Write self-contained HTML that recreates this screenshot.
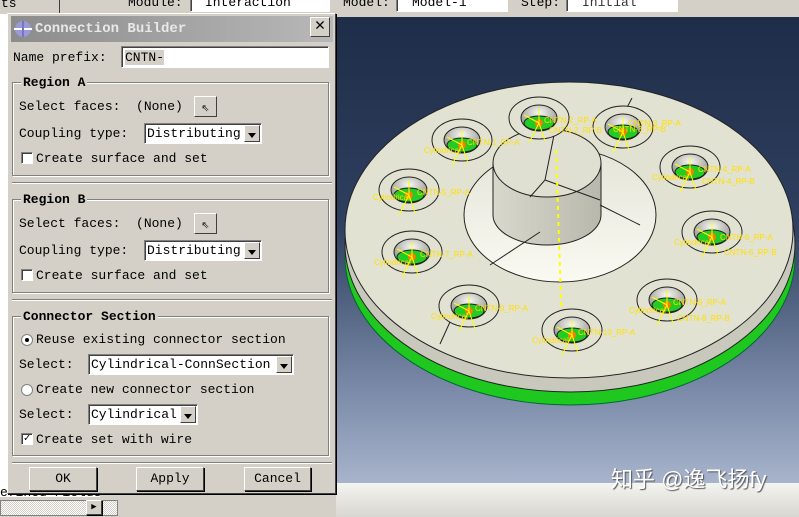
<!DOCTYPE html>
<html><head><meta charset="utf-8"><style>
*{margin:0;padding:0;box-sizing:border-box}
body{width:799px;height:517px;overflow:hidden;background:#d4d0c8;position:relative;font-family:"Liberation Mono",monospace;font-size:13px;color:#000}
.a{position:absolute;white-space:pre}
.vp{position:absolute;left:336px;top:17px;width:463px;height:466px;background:linear-gradient(#1e2d48 0%,#2f4060 45%,#7a8aa8 80%,#a8b4cc 100%)}
.bot{position:absolute;left:336px;top:483px;width:463px;height:34px;background:linear-gradient(#f4f4f0,#d8d6d0)}
.dlg{position:absolute;left:7px;top:13px;width:329px;height:481px;background:#d4d0c8;border:1px solid #fff;border-right-color:#404040;border-bottom-color:#404040;box-shadow:1px 1px 0 #000}
.title{position:absolute;left:3px;top:2px;width:322px;height:26px;background:linear-gradient(90deg,#8c8c8c,#b8b8b8)}
.grp{position:absolute;border:1px solid #808080;box-shadow:inset 1px 1px 0 #fff,1px 1px 0 #fff}
.gt{position:absolute;background:#d4d0c8;font-weight:bold;padding:0 2px}
.in{position:absolute;background:#fff;border:1px solid #808080;border-right-color:#fff;border-bottom-color:#fff;box-shadow:inset 1px 1px 0 #404040}
.dd{position:absolute;width:16px;background:#d4d0c8;border:1px solid #fff;border-right-color:#404040;border-bottom-color:#404040}
.dd:after{content:"";position:absolute;left:3px;top:7px;border:4px solid transparent;border-top:5px solid #000;border-bottom:0}
.btn{position:absolute;background:#d4d0c8;border:1px solid #fff;border-right-color:#404040;border-bottom-color:#404040;box-shadow:1px 1px 0 #000;text-align:center;line-height:22px}
.cb{position:absolute;width:12px;height:12px;background:#fff;border:1px solid #808080;border-right-color:#fff;border-bottom-color:#fff;box-shadow:inset 1px 1px 0 #404040;font-size:11px;line-height:10px;text-align:center}
.rb{position:absolute;width:12px;height:12px;border-radius:50%;background:#fff;border:1px solid #808080}
.sep{position:absolute;left:4px;width:320px;height:2px;border-top:1px solid #808080;border-bottom:1px solid #fff}
</style></head><body>
<div class="a" style="left:0;top:0;width:60px;height:13px;background:#d4d0c8;border-right:1px solid #404040"></div>
<div class="a" style="left:1px;top:-4px">ts</div>
<div class="a" style="left:128px;top:-5px">Module:</div>
<div class="in" style="left:190px;top:-4px;width:140px;height:16px"></div>
<div class="a" style="left:205px;top:-5px">Interaction</div>
<div class="a" style="left:343px;top:-5px">Model:</div>
<div class="in" style="left:396px;top:-4px;width:112px;height:16px"></div>
<div class="a" style="left:412px;top:-5px">Model-1</div>
<div class="a" style="left:521px;top:-5px">Step:</div>
<div class="in" style="left:566px;top:-4px;width:112px;height:16px"></div>
<div class="a" style="left:582px;top:-5px;color:#333">Initial</div>
<div class="a" style="left:0;top:14px;width:7px;height:480px;background:#fff"></div>
<div class="vp"><svg width="463" height="466" viewBox="336 17 463 466" style="position:absolute;left:0;top:0">
<defs><radialGradient id="h" cx="50%" cy="30%" r="70%"><stop offset="0" stop-color="#f8f8f4"/><stop offset="1" stop-color="#8a8a84"/></radialGradient>
<linearGradient id="cyl" x1="0" x2="1"><stop offset="0" stop-color="#d8d8cc"/><stop offset=".5" stop-color="#c8c8bc"/><stop offset="1" stop-color="#b8b8ac"/></linearGradient>
<linearGradient id="fil" x1="0" y1="0" x2="0" y2="1"><stop offset="0" stop-color="#e4e4d8"/><stop offset="1" stop-color="#fafaf2"/></linearGradient></defs>
<ellipse cx="570" cy="257" rx="225" ry="148" fill="#1ec81e" stroke="#063" stroke-width="1"/>
<ellipse cx="570" cy="244" rx="225" ry="148" fill="#c8c8bc" stroke="#222"/>
<ellipse cx="569" cy="230" rx="224" ry="148" fill="#e2e2d2" stroke="#222"/>
<ellipse cx="560" cy="215" rx="96" ry="67" fill="url(#fil)" stroke="#222"/>
<path d="M493 163 L493 215 A54 30 0 0 0 601 215 L601 163 Z" fill="url(#cyl)" stroke="#222"/>
<ellipse cx="547" cy="163" rx="54" ry="34" fill="#e0e0d2" stroke="#222"/>
<path d="M545 180 L555 130 M545 180 L600 200 M545 180 L530 197 M632 98 L610 140 M440 344 L460 300 M540 232 L490 265 M600 205 L640 225" stroke="#222" fill="none"/>
<path d="M556 150 L562 330" stroke="#ff0" stroke-dasharray="4 4" stroke-width="2"/>
<g id="holes" stroke="#222" fill="none">
<g transform="translate(462,140)"><ellipse rx="30" ry="21" fill="#e2e2d2"/><ellipse rx="18" ry="13" fill="url(#h)"/><ellipse cy="5" rx="15" ry="7" fill="#22cc22"/></g>
<g transform="translate(539,118)"><ellipse rx="30" ry="21" fill="#e2e2d2"/><ellipse rx="18" ry="13" fill="url(#h)"/><ellipse cy="5" rx="15" ry="7" fill="#22cc22"/></g>
<g transform="translate(623,127)"><ellipse rx="30" ry="21" fill="#e2e2d2"/><ellipse rx="18" ry="13" fill="url(#h)"/><ellipse cy="5" rx="15" ry="7" fill="#22cc22"/></g>
<g transform="translate(690,167)"><ellipse rx="30" ry="21" fill="#e2e2d2"/><ellipse rx="18" ry="13" fill="url(#h)"/><ellipse cy="5" rx="15" ry="7" fill="#22cc22"/></g>
<g transform="translate(409,190)"><ellipse rx="30" ry="21" fill="#e2e2d2"/><ellipse rx="18" ry="13" fill="url(#h)"/><ellipse cy="5" rx="15" ry="7" fill="#22cc22"/></g>
<g transform="translate(712,232)"><ellipse rx="30" ry="21" fill="#e2e2d2"/><ellipse rx="18" ry="13" fill="url(#h)"/><ellipse cy="5" rx="15" ry="7" fill="#22cc22"/></g>
<g transform="translate(412,252)"><ellipse rx="30" ry="21" fill="#e2e2d2"/><ellipse rx="18" ry="13" fill="url(#h)"/><ellipse cy="5" rx="15" ry="7" fill="#22cc22"/></g>
<g transform="translate(667,300)"><ellipse rx="30" ry="21" fill="#e2e2d2"/><ellipse rx="18" ry="13" fill="url(#h)"/><ellipse cy="5" rx="15" ry="7" fill="#22cc22"/></g>
<g transform="translate(469,306)"><ellipse rx="30" ry="21" fill="#e2e2d2"/><ellipse rx="18" ry="13" fill="url(#h)"/><ellipse cy="5" rx="15" ry="7" fill="#22cc22"/></g>
<g transform="translate(572,330)"><ellipse rx="30" ry="21" fill="#e2e2d2"/><ellipse rx="18" ry="13" fill="url(#h)"/><ellipse cy="5" rx="15" ry="7" fill="#22cc22"/></g>
</g>
<g fill="#ffe000" font-family="Liberation Sans" font-size="8" stroke="#ff0">
<g transform="translate(462,145)"><circle r="4" fill="#f08000" stroke="none"/><path d="M0 0 L-15 -8 M0 0 L-10 20 M0 0 L6 18 M0 0 L0 -15"/><text x="5" y="0" stroke="none">CNTN-1_RP-A</text><text x="-38" y="8" stroke="none">Cylindrical</text></g>
<g transform="translate(539,123)"><circle r="4" fill="#f08000" stroke="none"/><path d="M0 0 L-15 -8 M0 0 L-10 20 M0 0 L6 18 M0 0 L0 -15"/><text x="5" y="0" stroke="none">CNTN-2_RP-A</text><text x="10" y="10" stroke="none">CNTN-2_RP-B</text></g>
<g transform="translate(623,132)"><circle r="4" fill="#f08000" stroke="none"/><path d="M0 0 L-15 -8 M0 0 L-10 20 M0 0 L6 18 M0 0 L0 -15"/><text x="5" y="-6" stroke="none">CNTN-3_RP-A</text><text x="-10" y="0" stroke="none">CNTN-3_RP-B</text></g>
<g transform="translate(690,172)"><circle r="4" fill="#f08000" stroke="none"/><path d="M0 0 L-15 -8 M0 0 L-10 20 M0 0 L6 18 M0 0 L0 -15"/><text x="8" y="0" stroke="none">CNTN-4_RP-A</text><text x="-38" y="8" stroke="none">Cylindrical</text><text x="12" y="12" stroke="none">CNTN-4_RP-B</text></g>
<g transform="translate(409,195)"><circle r="4" fill="#f08000" stroke="none"/><path d="M0 0 L-15 -8 M0 0 L-10 20 M0 0 L6 18 M0 0 L0 -15"/><text x="8" y="0" stroke="none">CNTN-5_RP-A</text><text x="-36" y="5" stroke="none">Cylindrical</text></g>
<g transform="translate(712,237)"><circle r="4" fill="#f08000" stroke="none"/><path d="M0 0 L-15 -8 M0 0 L-10 20 M0 0 L6 18 M0 0 L0 -15"/><text x="8" y="3" stroke="none">CNTN-6_RP-A</text><text x="-38" y="8" stroke="none">Cylindrical</text><text x="12" y="18" stroke="none">CNTN-6_RP-B</text></g>
<g transform="translate(412,257)"><circle r="4" fill="#f08000" stroke="none"/><path d="M0 0 L-15 -8 M0 0 L-10 20 M0 0 L6 18 M0 0 L0 -15"/><text x="8" y="0" stroke="none">CNTN-7_RP-A</text><text x="-38" y="8" stroke="none">Cylindrical</text></g>
<g transform="translate(667,305)"><circle r="4" fill="#f08000" stroke="none"/><path d="M0 0 L-15 -8 M0 0 L-10 20 M0 0 L6 18 M0 0 L0 -15"/><text x="6" y="0" stroke="none">CNTN-8_RP-A</text><text x="-38" y="8" stroke="none">Cylindrical</text><text x="10" y="16" stroke="none">CNTN-8_RP-B</text></g>
<g transform="translate(469,311)"><circle r="4" fill="#f08000" stroke="none"/><path d="M0 0 L-15 -8 M0 0 L-10 20 M0 0 L6 18 M0 0 L0 -15"/><text x="6" y="0" stroke="none">CNTN-9_RP-A</text><text x="-38" y="8" stroke="none">Cylindrical</text></g>
<g transform="translate(572,335)"><circle r="4" fill="#f08000" stroke="none"/><path d="M0 0 L-15 -8 M0 0 L-10 20 M0 0 L6 18 M0 0 L0 -15"/><text x="6" y="0" stroke="none">CNTN-10_RP-A</text><text x="-40" y="8" stroke="none">Cylindrical</text></g>
</g>
</svg></div>
<div class="bot"></div>
<div class="a" style="left:611px;top:462px;font-family:'Liberation Sans','Noto Sans CJK SC',sans-serif;font-size:22px;color:#fff;text-shadow:1px 1px 1px #555">知乎 @逸飞扬fy</div>
<div class="a" style="left:0;top:494px;width:336px;height:23px;background:#d4d0c8"></div>
<div class="a" style="left:0;top:484px;width:100px;height:13px;background:#fff;overflow:hidden;line-height:18px">efined Fields</div>
<div class="a" style="left:0;top:500px;width:118px;height:16px;background:repeating-conic-gradient(#fff 0 25%,#d4d0c8 0 50%) 0 0/2px 2px;border:1px solid #808080"></div>
<div class="btn" style="left:86px;top:500px;width:16px;height:15px;line-height:13px;font-size:9px">▶</div>

<div class="dlg">
<div class="title"></div>
<svg class="a" style="left:5px;top:5px" width="20" height="20"><circle cx="10" cy="10" r="8" fill="#9a9ad8"/><rect x="1" y="9" width="18" height="2" fill="#fff"/><rect x="9" y="2" width="2" height="16" fill="#7777c0"/></svg>
<div class="a" style="left:27px;top:7px;color:#e8e8e8;font-weight:bold;font-size:14px">Connection Builder</div>
<div class="btn" style="left:302px;top:3px;width:20px;height:20px;line-height:18px;font-size:17px;box-shadow:none">✕</div>

<div class="a" style="left:5px;top:36px">Name prefix:</div>
<div class="in" style="left:113px;top:32px;width:208px;height:22px"></div>
<div class="a" style="left:117px;top:36px;background:#d4d0c8">CNTN-</div>

<div class="grp" style="left:4px;top:68px;width:317px;height:94px"></div>
<div class="gt" style="left:13px;top:61px">Region A</div>
<div class="a" style="left:11px;top:85px">Select faces:  (None)</div>
<div class="btn" style="left:186px;top:82px;width:23px;height:21px;box-shadow:none">⇖</div>
<div class="a" style="left:11px;top:112px">Coupling type:</div>
<div class="in" style="left:136px;top:109px;width:118px;height:21px"></div>
<div class="a" style="left:139px;top:112px">Distributing</div>
<div class="dd" style="left:236px;top:111px;height:17px"></div>
<div class="cb" style="left:13px;top:138px"></div>
<div class="a" style="left:28px;top:137px">Create surface and set</div>
<div class="sep" style="top:168px"></div>

<div class="grp" style="left:4px;top:185px;width:317px;height:94px"></div>
<div class="gt" style="left:13px;top:178px">Region B</div>
<div class="a" style="left:11px;top:202px">Select faces:  (None)</div>
<div class="btn" style="left:186px;top:199px;width:23px;height:21px;box-shadow:none">⇖</div>
<div class="a" style="left:11px;top:229px">Coupling type:</div>
<div class="in" style="left:136px;top:226px;width:118px;height:21px"></div>
<div class="a" style="left:139px;top:229px">Distributing</div>
<div class="dd" style="left:236px;top:228px;height:17px"></div>
<div class="cb" style="left:13px;top:255px"></div>
<div class="a" style="left:28px;top:254px">Create surface and set</div>
<div class="sep" style="top:285px"></div>

<div class="grp" style="left:4px;top:302px;width:317px;height:140px"></div>
<div class="gt" style="left:13px;top:295px">Connector Section</div>
<div class="rb" style="left:13px;top:320px"><div style="position:absolute;left:3px;top:3px;width:4px;height:4px;background:#000;border-radius:50%"></div></div>
<div class="a" style="left:28px;top:318px">Reuse existing connector section</div>
<div class="a" style="left:11px;top:343px">Select:</div>
<div class="in" style="left:80px;top:340px;width:206px;height:21px"></div>
<div class="a" style="left:83px;top:343px">Cylindrical-ConnSection</div>
<div class="dd" style="left:268px;top:342px;height:17px"></div>
<div class="rb" style="left:13px;top:370px"></div>
<div class="a" style="left:28px;top:368px">Create new connector section</div>
<div class="a" style="left:11px;top:393px">Select:</div>
<div class="in" style="left:80px;top:390px;width:110px;height:21px"></div>
<div class="a" style="left:83px;top:393px">Cylindrical</div>
<div class="dd" style="left:172px;top:392px;height:17px"></div>
<div class="cb" style="left:13px;top:419px">✓</div>
<div class="a" style="left:28px;top:418px">Create set with wire</div>
<div class="sep" style="top:448px"></div>

<div class="btn" style="left:21px;top:453px;width:68px;height:24px">OK</div>
<div class="btn" style="left:128px;top:453px;width:68px;height:24px">Apply</div>
<div class="btn" style="left:236px;top:453px;width:67px;height:24px">Cancel</div>
</div>
</body></html>
